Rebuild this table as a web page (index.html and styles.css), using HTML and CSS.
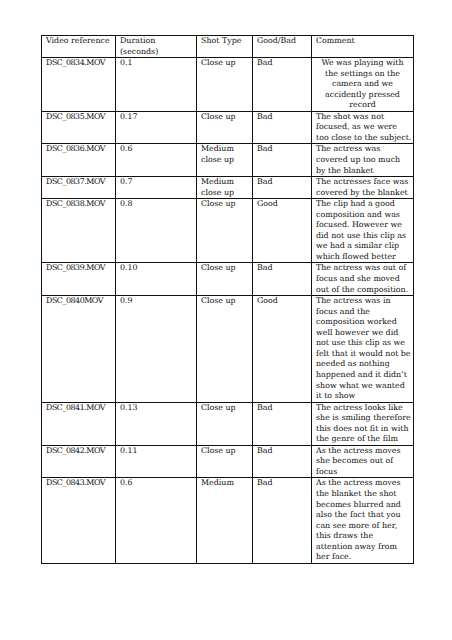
FILE: index.html
```html
<!DOCTYPE html>
<html lang="en">
<head>
<meta charset="utf-8">
<title>Video reference log</title>
<link rel="stylesheet" href="styles.css">
</head>
<body>
<table class="log">
  <colgroup>
    <col class="c-ref"><col class="c-dur"><col class="c-shot"><col class="c-gb"><col class="c-com">
  </colgroup>
  <tr>
    <td>Video reference</td>
    <td>Duration<br>(seconds)</td>
    <td>Shot Type</td>
    <td>Good/Bad</td>
    <td>Comment</td>
  </tr>
  <tr>
    <td class="file">DSC_0834.MOV</td>
    <td>0.1</td>
    <td>Close up</td>
    <td>Bad</td>
    <td class="center">We was playing with<br>the settings on the<br>camera and we<br>accidently pressed<br>record</td>
  </tr>
  <tr>
    <td class="file">DSC_0835.MOV</td>
    <td>0.17</td>
    <td>Close up</td>
    <td>Bad</td>
    <td>The shot was not<br>focused, as we were<br>too close to the subject.</td>
  </tr>
  <tr>
    <td class="file">DSC_0836.MOV</td>
    <td>0.6</td>
    <td>Medium<br>close up</td>
    <td>Bad</td>
    <td>The actress was<br>covered up too much<br>by the blanket</td>
  </tr>
  <tr>
    <td class="file">DSC_0837.MOV</td>
    <td>0.7</td>
    <td>Medium<br>close up</td>
    <td>Bad</td>
    <td>The actresses face was<br>covered by the blanket</td>
  </tr>
  <tr>
    <td class="file">DSC_0838.MOV</td>
    <td>0.8</td>
    <td>Close up</td>
    <td>Good</td>
    <td>The clip had a good<br>composition and was<br>focused. However we<br>did not use this clip as<br>we had a similar clip<br>which flowed better</td>
  </tr>
  <tr>
    <td class="file">DSC_0839.MOV</td>
    <td>0.10</td>
    <td>Close up</td>
    <td>Bad</td>
    <td>The actress was out of<br>focus and she moved<br>out of the composition.</td>
  </tr>
  <tr>
    <td class="file">DSC_0840MOV</td>
    <td>0.9</td>
    <td>Close up</td>
    <td>Good</td>
    <td>The actress was in<br>focus and the<br>composition worked<br>well however we did<br>not use this clip as we<br>felt that it would not be<br>needed as nothing<br>happened and it didn’t<br>show what we wanted<br>it to show</td>
  </tr>
  <tr>
    <td class="file">DSC_0841.MOV</td>
    <td>0.13</td>
    <td>Close up</td>
    <td>Bad</td>
    <td>The actress looks like<br>she is smiling therefore<br>this does not fit in with<br>the genre of the film</td>
  </tr>
  <tr>
    <td class="file">DSC_0842.MOV</td>
    <td>0.11</td>
    <td>Close up</td>
    <td>Bad</td>
    <td>As the actress moves<br>she becomes out of<br>focus</td>
  </tr>
  <tr>
    <td class="file">DSC_0843.MOV</td>
    <td>0.6</td>
    <td>Medium</td>
    <td>Bad</td>
    <td>As the actress moves<br>the blanket the shot<br>becomes blurred and<br>also the fact that you<br>can see more of her,<br>this draws the<br>attention away from<br>her face.</td>
  </tr>
</table>
</body>
</html>
```

FILE: styles.css
```css
html, body {
  margin: 0;
  padding: 0;
  background: #ffffff;
}

body {
  padding: 35px 0 0 41px;
  font-family: "DejaVu Serif", serif;
  font-size: 7.9px;
  line-height: 10.55px;
  color: #111111;
}

.log {
  border-collapse: collapse;
  table-layout: fixed;
  width: 372px;
}

.c-ref { width: 74px; }
.c-dur { width: 81px; }
.c-shot { width: 56px; }
.c-gb { width: 59px; }
.c-com { width: 102px; }

.log td {
  border: 1px solid #111111;
  padding: 0 0 0 4px;
  vertical-align: top;
  text-align: left;
  white-space: nowrap;
  overflow: visible;
}

.log td.file {
  letter-spacing: -0.45px;
}

.log td.center {
  text-align: center;
  padding: 0;
}
```
